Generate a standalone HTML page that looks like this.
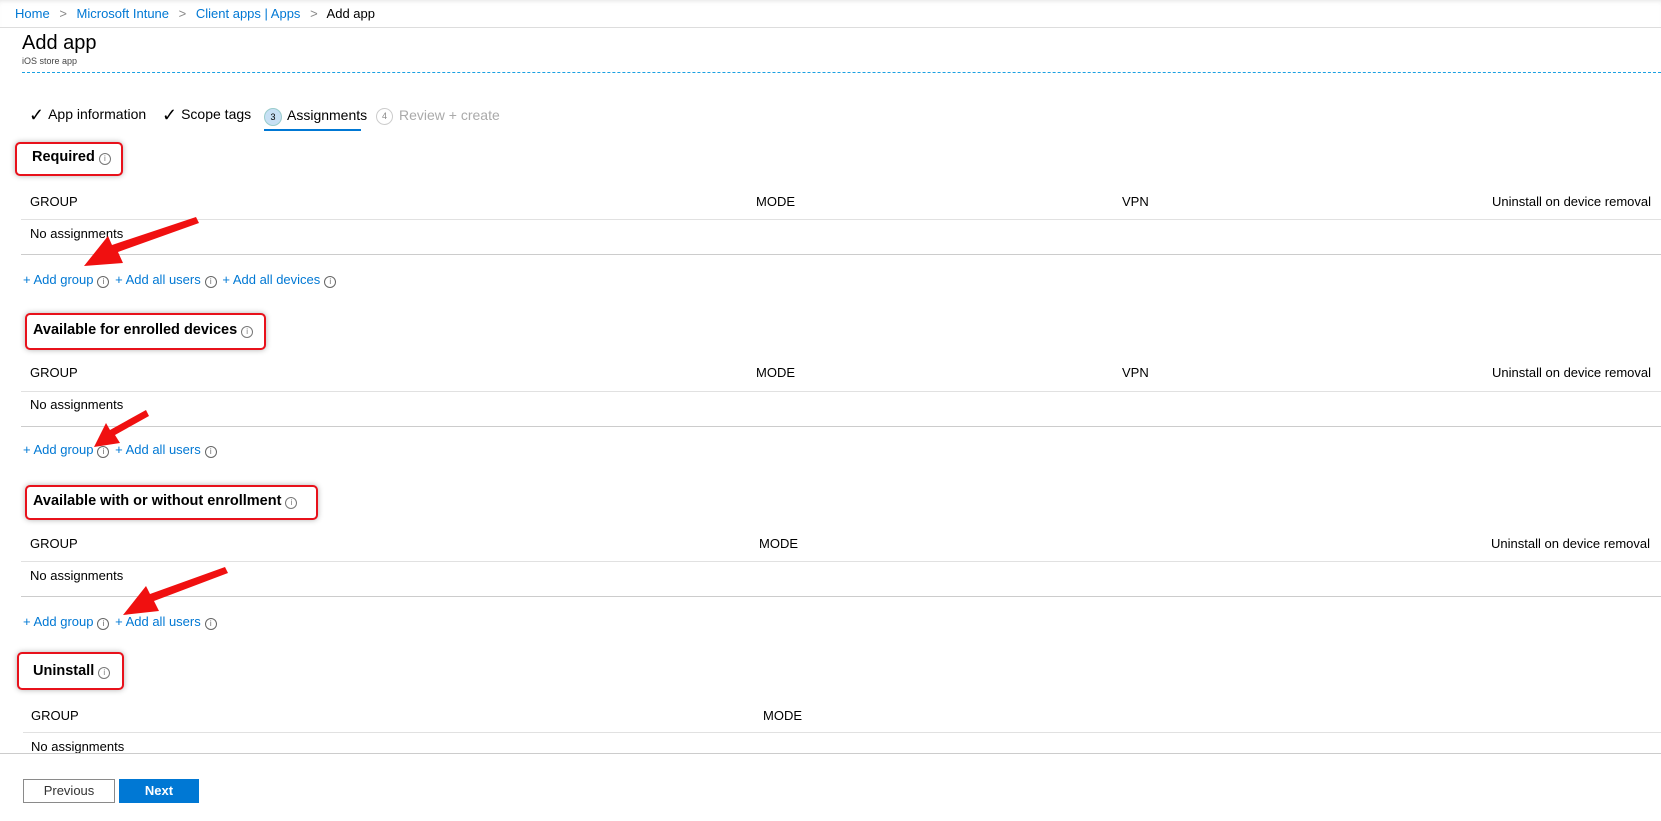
<!DOCTYPE html>
<html><head><meta charset="utf-8"><style>
body{margin:0;width:1661px;height:820px;overflow:hidden;background:#fff;font-family:"Liberation Sans",sans-serif;color:#000;position:relative;font-size:13px}
.a{position:absolute;white-space:nowrap}
.blue{color:#0078d4}
.hl{position:absolute;height:1px;background:#e1e1e1}
.box{position:absolute;border:2px solid #e8111b;border-radius:5px;box-shadow:0 0 6px rgba(0,0,0,.3);background:#fff}
.ttl{font-weight:bold;font-size:14.5px}
.i{display:inline-block;width:10px;height:10px;border:1px solid #777;border-radius:50%;font-size:8px;line-height:10px;text-align:center;color:#777;vertical-align:0;margin-left:4px;font-weight:normal}
.ib{border-color:#666;color:#666;margin-right:2px}
.ck{font-size:18px;vertical-align:-2px;margin-right:4px}
</style></head><body>
<div class="a" style="left:0;top:0;width:1661px;height:27px;border-bottom:1px solid #ddd;box-shadow:0 4px 6px -4px rgba(0,0,0,.15) inset"></div>
<div class="a" style="left:15px;top:6px;font-size:13px"><span class="blue">Home</span> <span style="color:#888;margin:0 6px">&gt;</span> <span class="blue">Microsoft Intune</span> <span style="color:#888;margin:0 6px">&gt;</span> <span class="blue">Client apps | Apps</span> <span style="color:#888;margin:0 6px">&gt;</span> Add app</div>
<div class="a" style="left:22px;top:32px;font-size:20px">Add app</div>
<div class="a" style="left:22px;top:56px;font-size:9px;color:#444">iOS store app</div>
<div class="a" style="left:22px;top:72px;width:1639px;border-top:1px dashed #1ba1e2"></div>

<div class="a" style="left:29px;top:105px;font-size:14px"><span class="ck">✓</span>App information</div>
<div class="a" style="left:162px;top:105px;font-size:14px"><span class="ck">✓</span>Scope tags</div>
<div class="a" style="left:264px;top:108px;width:16px;height:16px;border-radius:50%;background:#c7e0f4;border:1px solid #9cc;font-size:9px;text-align:center;line-height:16px">3</div>
<div class="a" style="left:287px;top:107px;font-size:14px">Assignments</div>
<div class="a" style="left:264px;top:129px;width:97px;height:2px;background:#0078d4"></div>
<div class="a" style="left:376px;top:108px;width:15px;height:15px;border-radius:50%;border:1px solid #ccc;color:#888;font-size:9px;text-align:center;line-height:15px">4</div>
<div class="a" style="left:399px;top:107px;font-size:14px;color:#aaa">Review + create</div>

<!-- Section 1 -->
<div class="box" style="left:15px;top:142px;width:104px;height:30px"></div>
<div class="a ttl" style="left:32px;top:149px">Required<span class="i">i</span></div>
<div class="a" style="left:30px;top:194px">GROUP</div><div class="a" style="left:756px;top:194px">MODE</div><div class="a" style="left:1122px;top:194px">VPN</div><div class="a" style="right:10px;top:194px">Uninstall on device removal</div>
<div class="hl" style="left:21px;top:219px;width:1640px"></div>
<div class="a" style="left:30px;top:226px">No assignments</div>
<div class="hl" style="left:21px;top:254px;width:1640px;background:#ccc"></div>
<div class="a blue" style="left:23px;top:272px">+ Add group<span class="i ib">i</span> + Add all users<span class="i ib">i</span> + Add all devices<span class="i ib">i</span></div>

<!-- Section 2 -->
<div class="box" style="left:25px;top:313px;width:237px;height:33px"></div>
<div class="a ttl" style="left:33px;top:322px">Available for enrolled devices<span class="i">i</span></div>
<div class="a" style="left:30px;top:365px">GROUP</div><div class="a" style="left:756px;top:365px">MODE</div><div class="a" style="left:1122px;top:365px">VPN</div><div class="a" style="right:10px;top:365px">Uninstall on device removal</div>
<div class="hl" style="left:21px;top:391px;width:1640px"></div>
<div class="a" style="left:30px;top:397px">No assignments</div>
<div class="hl" style="left:21px;top:426px;width:1640px;background:#ccc"></div>
<div class="a blue" style="left:23px;top:442px">+ Add group<span class="i ib">i</span> + Add all users<span class="i ib">i</span></div>

<!-- Section 3 -->
<div class="box" style="left:25px;top:485px;width:289px;height:31px"></div>
<div class="a ttl" style="left:33px;top:493px">Available with or without enrollment<span class="i">i</span></div>
<div class="a" style="left:30px;top:536px">GROUP</div><div class="a" style="left:759px;top:536px">MODE</div><div class="a" style="right:11px;top:536px">Uninstall on device removal</div>
<div class="hl" style="left:21px;top:561px;width:1640px"></div>
<div class="a" style="left:30px;top:568px">No assignments</div>
<div class="hl" style="left:21px;top:596px;width:1640px;background:#ccc"></div>
<div class="a blue" style="left:23px;top:614px">+ Add group<span class="i ib">i</span> + Add all users<span class="i ib">i</span></div>

<!-- Section 4 -->
<div class="box" style="left:17px;top:652px;width:103px;height:34px"></div>
<div class="a ttl" style="left:33px;top:663px">Uninstall<span class="i">i</span></div>
<div class="a" style="left:31px;top:708px">GROUP</div><div class="a" style="left:763px;top:708px">MODE</div>
<div class="hl" style="left:23px;top:732px;width:1638px"></div>
<div class="a" style="left:31px;top:739px">No assignments</div>
<div class="a" style="left:0;top:753px;width:1661px;height:67px;background:#fff;border-top:1px solid #ccc"></div>
<div class="a" style="left:23px;top:779px;width:90px;height:22px;border:1px solid #8a8a8a;text-align:center;line-height:22px;color:#333">Previous</div>
<div class="a" style="left:119px;top:779px;width:80px;height:24px;background:#0078d4;color:#fff;font-weight:bold;text-align:center;line-height:24px">Next</div>

<svg class="a" style="left:0;top:0" width="1661" height="820">
<g fill="#f01010">
<polygon points="196,217 199,223 118,252 123,263 84,266 108,236 112,245"/>
<polygon points="146,410 149,416 115,435 120,443 94,447 106,423 110,430"/>
<polygon points="225,567 228,573 154,601 159,611 123,615 146,586 150,594"/>
</g></svg>
</body></html>
